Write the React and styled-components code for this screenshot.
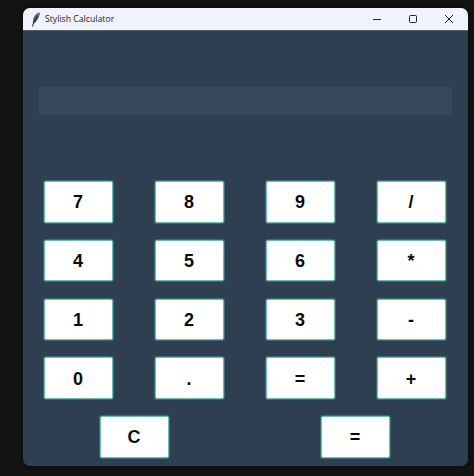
import React from 'react';
import styled, { createGlobalStyle } from 'styled-components';

const GlobalStyle = createGlobalStyle`
  html, body {
    margin: 0;
    padding: 0;
    background: #141414;
    overflow: hidden;
  }
`;

const Desktop = styled.div`
  width: 474px;
  height: 476px;
  padding: 8px 6px 10px 23px;
  box-sizing: border-box;
  background: #141414;
`;

const Window = styled.div`
  height: 458px;
  border-radius: 7px;
  overflow: hidden;
  display: flex;
  flex-direction: column;
  background: #2e3f51;
  box-shadow: 0 0 6px rgba(0, 0, 0, 0.6);
`;

const TitleBar = styled.div`
  height: 22px;
  flex: none;
  display: flex;
  align-items: center;
  padding: 0 1px 0 7px;
  background: #f1f3fa;
  border-bottom: 1px solid #56606c;
  font-family: 'Open Sans', 'Liberation Sans', sans-serif;
  font-size: 8.7px;
  color: #1c1c1c;
`;

const Title = styled.span`
  margin-left: 3px;
  flex: 1;
`;

const WinButton = styled.div`
  width: 36px;
  height: 22px;
  display: flex;
  align-items: center;
  justify-content: center;
  color: #222;
`;

const Display = styled.div`
  height: 28px;
  margin: 56px 16px 0;
  background: #35485e;
`;

const Keys = styled.div`
  margin: 65px 21px 0 20px;
  display: flex;
  flex-direction: column;
  gap: 15.3px;
`;

const Row = styled.div`
  display: flex;
  justify-content: ${({ $centered }) => ($centered ? 'center' : 'space-between')};
  gap: ${({ $centered }) => ($centered ? '150px' : '0')};
`;

const Key = styled.button`
  width: 69px;
  height: 41.5px;
  margin: 1px;
  padding: 2px 1px 0 0;
  box-sizing: border-box;
  background: #fff;
  border: 1px solid #6dbcb4;
  border-radius: 2px;
  box-shadow: 0 0 0 1px rgba(58, 138, 134, 0.65);
  font-family: 'Liberation Sans', Arial, sans-serif;
  font-weight: 700;
  font-size: 18px;
  color: #0a0a0a;
`;

const Feather = () => (
  <svg width="12" height="15" viewBox="0 0 12 15">
    <path d="M10 0.500C6.500 1 3.500 4 3 8.500c-.2 1.500 0 2.500.3 3.200C6 11 9 6.500 10 0.500z" fill="#52637a" />
    <path d="M7.500 4 3.500 11 2.500 14.500" stroke="#20262e" strokeWidth="1" fill="none" />
  </svg>
);

const rows = [
  ['7', '8', '9', '/'],
  ['4', '5', '6', '*'],
  ['1', '2', '3', '-'],
  ['0', '.', '=', '+'],
];

export default function App() {
  return (
    <>
      <GlobalStyle />
      <Desktop>
        <Window>
          <TitleBar>
            <Feather />
            <Title>Stylish Calculator</Title>
            <WinButton>
              <svg width="10" height="10" viewBox="0 0 10 10">
                <path d="M1 5.500h8" stroke="currentColor" strokeWidth="1" />
              </svg>
            </WinButton>
            <WinButton>
              <svg width="10" height="10" viewBox="0 0 10 10">
                <rect x="1.500" y="1.500" width="7" height="7" rx="1" fill="none" stroke="currentColor" strokeWidth="1" />
              </svg>
            </WinButton>
            <WinButton>
              <svg width="10" height="10" viewBox="0 0 10 10">
                <path d="M1 1l8 8M9 1l-8 8" stroke="currentColor" strokeWidth="1" />
              </svg>
            </WinButton>
          </TitleBar>
          <Display />
          <Keys>
            {rows.map((row) => (
              <Row key={row.join('')}>
                {row.map((k) => (
                  <Key key={k}>{k}</Key>
                ))}
              </Row>
            ))}
            <Row $centered>
              <Key>C</Key>
              <Key>=</Key>
            </Row>
          </Keys>
        </Window>
      </Desktop>
    </>
  );
}
